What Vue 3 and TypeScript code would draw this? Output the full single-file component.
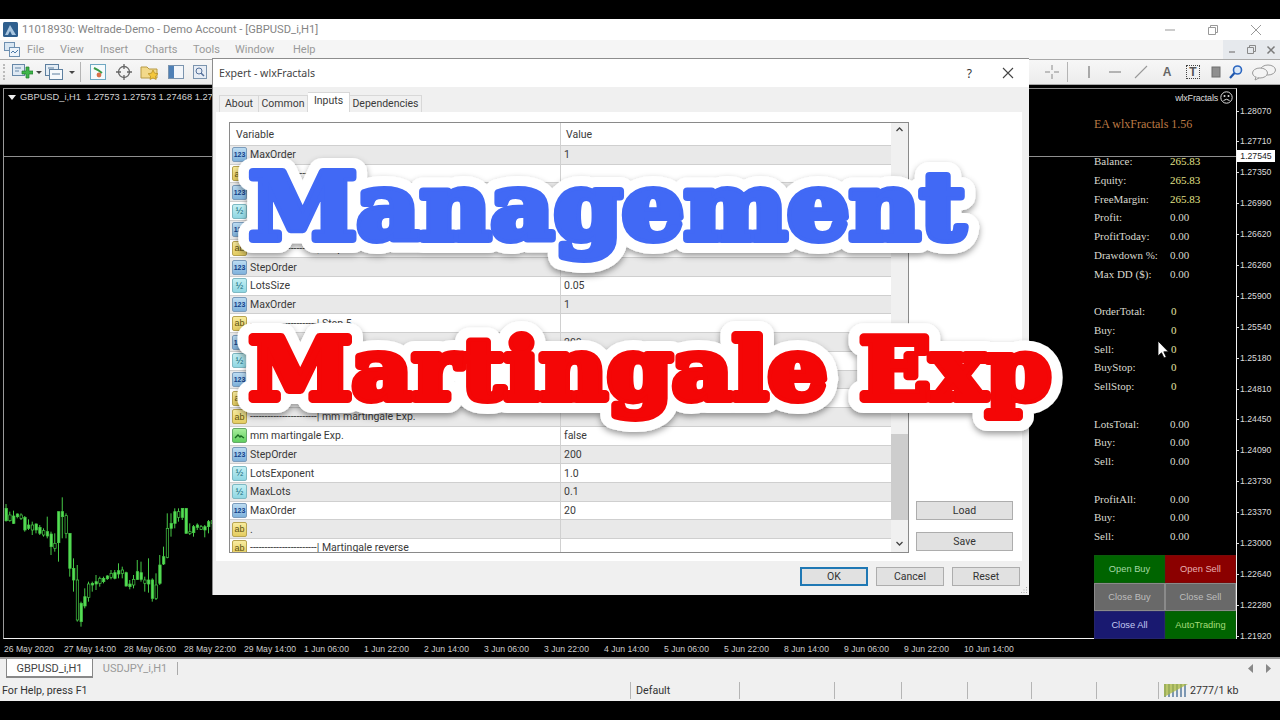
<script setup lang="ts">
const menus: string[] = ['File', 'View', 'Insert', 'Charts', 'Tools', 'Window', 'Help']

type Row = { icon: string; glyph: string; name: string; value: string }
const N = (name: string, value = ''): Row => ({ icon: 'n', glyph: '123', name, value })
const H = (name: string, value = ''): Row => ({ icon: 'h', glyph: '½', name, value })
const A = (name: string): Row => ({ icon: 'a', glyph: 'ab', name, value: '' })
const rows: Row[] = [
  N('MaxOrder', '1'),
  A('-----------------------| Step 3'),
  N('StepOrder', '200'),
  H('LotsSize', '0.05'),
  N('MaxOrder', '1'),
  A('-----------------------| Step 4'),
  N('StepOrder', '200'),
  H('LotsSize', '0.05'),
  N('MaxOrder', '1'),
  A('-----------------------| Step 5'),
  N('StepOrder', '200'),
  H('LotsSize', '0.05'),
  N('MaxOrder', '1'),
  A('.'),
  A('-----------------------| mm martingale Exp.'),
  { icon: 'b', glyph: '', name: 'mm martingale Exp.', value: 'false' },
  N('StepOrder', '200'),
  H('LotsExponent', '1.0'),
  H('MaxLots', '0.1'),
  N('MaxOrder', '20'),
  A('.'),
  A('-----------------------| Martingale reverse'),
]

const prices: string[] = ['1.28070', '1.27710', '1.27350', '1.26990', '1.26620', '1.26260', '1.25900', '1.25540', '1.25180', '1.24810', '1.24450', '1.24090', '1.23730', '1.23370', '1.23000', '1.22640', '1.22280', '1.21920']
const times: string[] = ['26 May 2020', '27 May 14:00', '28 May 06:00', '28 May 22:00', '29 May 14:00', '1 Jun 06:00', '1 Jun 22:00', '2 Jun 14:00', '3 Jun 06:00', '3 Jun 22:00', '4 Jun 14:00', '5 Jun 06:00', '5 Jun 22:00', '8 Jun 14:00', '9 Jun 06:00', '9 Jun 22:00', '10 Jun 14:00']

type Stat = { l?: string; v?: string; c?: string }
const stats: Stat[] = [
  { l: 'Balance:', v: '265.83', c: 'y' }, { l: 'Equity:', v: '265.83', c: 'y' }, { l: 'FreeMargin:', v: '265.83', c: 'y' },
  { l: 'Profit:', v: '0.00' }, { l: 'ProfitToday:', v: '0.00' }, { l: 'Drawdown %:', v: '0.00' }, { l: 'Max DD ($):', v: '0.00' }, {},
  { l: 'OrderTotal:', v: '0', c: 'i' }, { l: 'Buy:', v: '0', c: 'i' }, { l: 'Sell:', v: '0', c: 'i' }, { l: 'BuyStop:', v: '0', c: 'i' }, { l: 'SellStop:', v: '0', c: 'i' }, {},
  { l: 'LotsTotal:', v: '0.00' }, { l: 'Buy:', v: '0.00' }, { l: 'Sell:', v: '0.00' }, {},
  { l: 'ProfitAll:', v: '0.00' }, { l: 'Buy:', v: '0.00' }, { l: 'Sell:', v: '0.00' },
]
const actions = [
  { t: 'Open Buy', c: 'dg' }, { t: 'Open Sell', c: 'dr' },
  { t: 'Close Buy', c: 'gr' }, { t: 'Close Sell', c: 'gr' },
  { t: 'Close All', c: 'bl' }, { t: 'AutoTrading', c: 'dg2' },
]
const statusSeps: number[] = [630, 739, 834, 901, 967, 1031, 1096, 1158]
const statusCells = statusSeps.map((x, i) => ({ w: (i < statusSeps.length - 1 ? statusSeps[i + 1] : 1280) - x, t: i === 0 ? 'Default' : '' }))

// hi, lo, bodyTop, bodyBottom, in 3x crop units, origin (0,480)
const raw: number[][] = [[72,125,85,122],[95,125,105,122],[92,132,108,130],[100,115,102,110],[100,120,105,115],[108,155,112,150],[118,150,135,145],[125,165,135,150],[130,160,132,150],[135,165,142,160],[145,170,152,165],[110,175,155,168],[155,225,162,200],[160,215,190,205],[95,245,95,188],[52,175,95,110],[100,175,107,160],[160,290,160,265],[235,335,265,300],[255,425,300,420],[365,440,370,425],[325,385,350,378],[305,365,312,352],[305,335,310,315],[285,330,305,312],[290,320,295,310],[290,310,295,305],[285,300,288,296],[270,298,280,292],[270,298,278,295],[250,295,272,282],[260,295,270,280],[275,320,278,318],[300,328,312,320],[285,325,298,315],[240,300,275,298],[245,305,278,298],[290,335,300,310],[235,338,300,312],[295,365,300,355],[280,360,315,355],[225,315,255,310],[200,255,230,252],[100,235,145,232],[100,170,130,145],[85,145,95,130],[85,125,95,112],[85,120,85,112],[85,160,85,160],[130,165,155,160],[135,170,140,158],[130,150,135,142],[135,150,140,148],[135,172,140,150],[120,160,125,140],[120,150,122,130]]
const candles = raw.map((r, i) => ({
  x: 5 + 3.75 * i,
  hi: 480 + r[0] / 3,
  lo: 480 + r[1] / 3,
  top: 480 + r[2] / 3,
  h: Math.max(1, (r[3] - r[2]) / 3),
  solid: i % 3 !== 1,
}))
</script>

<template>
  <div class="page">
    <header class="caption">
      <svg class="appicon" width="15" height="15" viewBox="0 0 15 15"><rect width="15" height="15" rx="1.500" fill="#2f5f8e"/><path d="M2 13 7 3l6 10H9L7 9l-2 4z" fill="#a9c6e0"/></svg>
      <span class="capt">11018930: Weltrade-Demo - Demo Account - [GBPUSD_i,H1]</span>
      <div class="winbtns">
        <svg width="12" height="12" viewBox="0 0 12 12"><path d="M1 6h10" stroke="#999"/></svg>
        <svg width="12" height="12" viewBox="0 0 12 12"><path d="M1.500 3.500h7v7h-7zM3.500 3.500v-2h7v7h-2" fill="none" stroke="#999"/></svg>
        <svg width="12" height="12" viewBox="0 0 12 12"><path d="M1 1l10 10M11 1 1 11" stroke="#999"/></svg>
      </div>
    </header>

    <nav class="menubar">
      <svg class="menuicon" width="16" height="15" viewBox="0 0 16 15"><rect x=".5" y=".5" width="10" height="8" fill="#d8e6f2" stroke="#6d8fb0"/><rect x="5.500" y="5.500" width="10" height="9" fill="#eef4fa" stroke="#6d8fb0"/><path d="M7 11l2-2 2 2 3-3" fill="none" stroke="#4b7aa8"/></svg>
      <span v-for="m in menus" :key="m" class="menu">{{ m }}</span>
      <div class="mdi">
        <span><svg width="9" height="9" viewBox="0 0 9 9"><path d="M1 7h6" stroke="#8a8a8a" stroke-width="1.400"/></svg></span>
        <span><svg width="11" height="11" viewBox="0 0 11 11"><path d="M1.500 3.500h6v6h-6zM3.500 3V1.500h6v6H8" fill="none" stroke="#8a8a8a"/></svg></span>
        <span><svg width="10" height="10" viewBox="0 0 10 10"><path d="M1.500 1.500l7 7M8.500 1.500l-7 7" stroke="#7a7a7a" stroke-width="1.500"/></svg></span>
      </div>
    </nav>

    <div class="toolbar">
      <div class="tgroup">
        <span class="grip"></span>
        <svg class="ti first" width="22" height="18" viewBox="0 0 22 18"><rect x="1.500" y="1.500" width="12" height="11" fill="#dfe9f3" stroke="#6788a8"/><path d="M4 5h6M4 8h4" stroke="#6788a8"/><path d="M11 8h4V4h3v4h4v3h-4v4h-3v-4h-4z" fill="#3fb54a" stroke="#1f7d2c" stroke-width=".7"/></svg>
        <span class="caret"></span>
        <svg class="ti second" width="22" height="18" viewBox="0 0 22 18"><rect x="1.500" y="1.500" width="13" height="11" fill="#e4edf5" stroke="#5d7f9f"/><rect x="5.500" y="6.500" width="13" height="10" fill="#f6f9fc" stroke="#5d7f9f"/><path d="M4 5h6M8 11h8" stroke="#5d7f9f"/></svg>
        <span class="caret"></span>
        <span class="vsep"></span>
        <svg class="ti t3" width="18" height="18" viewBox="0 0 18 18"><rect x="1.500" y="1.500" width="15" height="15" fill="#f5fafc" stroke="#6fa8c2"/><path d="M5 5l4 2 4 3" fill="none" stroke="#3a9b47" stroke-width="2"/><circle cx="10" cy="12" r="2.400" fill="#d8704a"/></svg>
        <svg class="ti t4" width="18" height="18" viewBox="0 0 18 18"><circle cx="9" cy="9" r="5.500" fill="none" stroke="#666" stroke-width="1.300"/><path d="M9 1v5M9 12v5M1 9h5M12 9h5" stroke="#666" stroke-width="1.300"/></svg>
        <svg class="ti t5" width="20" height="18" viewBox="0 0 20 18"><path d="M1 4h6l2 2h8v9H1z" fill="#f2d98a" stroke="#b89b45"/><path d="M13 7l1.600 3.200 3.400.5-2.500 2.400.6 3.400-3.100-1.600-3 1.600.6-3.400-2.500-2.400 3.400-.5z" fill="#f4c73a" stroke="#b08a1c" stroke-width=".7"/></svg>
        <svg class="ti t6" width="18" height="18" viewBox="0 0 18 18"><rect x="1.500" y="2.500" width="15" height="13" fill="#f3f6fa" stroke="#7b94ae"/><rect x="2" y="3" width="5" height="12" fill="#4f80b6"/></svg>
        <svg class="ti t7" width="16" height="18" viewBox="0 0 16 18"><rect x="1.500" y="2.500" width="13" height="13" fill="#e7edf5" stroke="#7b94ae"/><circle cx="7" cy="8" r="3" fill="none" stroke="#54709a"/><path d="M9 10l3 3" stroke="#54709a" stroke-width="1.500"/></svg>
      </div>
      <div class="tgroup right">
        <span class="r cross"><svg width="16" height="16" viewBox="0 0 16 16"><path d="M8 1v5M8 10v5M1 8h5M10 8h5" stroke="#8a8a8a"/></svg></span>
        <span class="vsep short"></span>
        <span class="r"><svg width="16" height="16" viewBox="0 0 16 16"><path d="M8 2v12" stroke="#777" stroke-width="1.200"/></svg></span>
        <span class="r"><svg width="16" height="16" viewBox="0 0 16 16"><path d="M2 8h12" stroke="#888" stroke-width="1.200"/></svg></span>
        <span class="r"><svg width="16" height="16" viewBox="0 0 16 16"><path d="M2 14 14 2" stroke="#999" stroke-width="1.100"/></svg></span>
        <span class="r letter">A</span>
        <span class="r boxt">T</span>
        <span class="r rect"><svg width="16" height="16" viewBox="0 0 16 16"><rect x="4" y="3" width="8" height="10" fill="#8f8f8f" stroke="#6f6f6f"/></svg></span>
        <span class="r mag"><svg width="16" height="16" viewBox="0 0 16 16"><circle cx="9.500" cy="6" r="4" fill="#dbe8f7" stroke="#2b66c0" stroke-width="1.600"/><path d="M6.500 9 2 14" stroke="#1f56ab" stroke-width="2.200"/></svg></span>
        <span class="r chat"><svg width="26" height="18" viewBox="0 0 26 18"><ellipse cx="17" cy="7" rx="7.500" ry="5" fill="#f4f4f4" stroke="#9a9a9a"/><ellipse cx="9" cy="10" rx="7.500" ry="5" fill="#f4f4f4" stroke="#9a9a9a"/><path d="M5 14 4 17l4-2" fill="#f4f4f4" stroke="#9a9a9a"/></svg></span>
      </div>
    </div>

    <main class="chartarea">
      <div class="chartrow">
        <div class="plot">
          <div class="symbol"><i class="tri"></i>GBPUSD_i,H1&nbsp; 1.27573 1.27573 1.27468 1.27545</div>
          <div class="eaname">wlxFractals <svg width="13" height="13" viewBox="0 0 13 13"><circle cx="6.500" cy="6.500" r="5.700" fill="none" stroke="#ddd"/><circle cx="4.500" cy="5" r="1" fill="#ddd"/><circle cx="8.500" cy="5" r="1" fill="#ddd"/><path d="M3.500 9.500Q6.500 7 9.500 9.500" fill="none" stroke="#ddd"/></svg></div>
          <div class="hline"></div>
          <svg class="candles" width="212" height="150" viewBox="0 490 212 150">
            <g v-for="(c, i) in candles" :key="i">
              <path :d="`M${c.x + 1} ${c.hi}V${c.lo}`" stroke="#46c946" stroke-width="1" />
              <rect :x="c.x" :y="c.top" width="2.400" :height="c.h" :fill="c.solid ? '#55dd55' : '#000'" stroke="#46c946" stroke-width=".7" />
            </g>
          </svg>
          <aside class="side">
            <div class="eatitle">EA wlxFractals 1.56</div>
            <div class="stats">
              <div v-for="(s, i) in stats" :key="i" class="stat">
                <span class="sl">{{ s.l }}</span><span class="sv" :class="s.c">{{ s.v }}</span>
              </div>
            </div>
            <div class="actions">
              <div v-for="a in actions" :key="a.t" class="act" :class="a.c">{{ a.t }}</div>
            </div>
          </aside>
        </div>
        <div class="axis">
          <div v-for="p in prices" :key="p" class="price">{{ p }}</div>
          <div class="cur">1.27545</div>
        </div>
      </div>
      <div class="timeaxis"><span v-for="t in times" :key="t">{{ t }}</span></div>
    </main>

    <div class="tabbar">
      <div class="ctab active">GBPUSD_i,H1</div>
      <div class="ctab">USDJPY_i,H1</div>
      <span class="tabsep"></span>
      <div class="tabnav">
        <svg width="7" height="9" viewBox="0 0 7 9"><path d="M6 0v9L1 4.500z" fill="#888"/></svg>
        <svg width="7" height="9" viewBox="0 0 7 9"><path d="M1 0v9l5-4.500z" fill="#888"/></svg>
      </div>
    </div>

    <footer class="status">
      <span class="help">For Help, press F1</span>
      <div v-for="(c, i) in statusCells" :key="i" class="scell" :style="{ width: c.w + 'px' }">
        {{ c.t }}
        <template v-if="i === statusCells.length - 1">
          <svg width="24" height="13" viewBox="0 0 24 13" class="net">
            <path v-for="n in 12" :key="n" :d="`M${n * 2 - 1} 0V13`" :stroke="n % 2 ? '#1f4f80' : '#f0f0f0'" stroke-width="1.100"/>
            <path d="M0 0H24L0 13z" fill="#a8b83e" opacity=".75"/>
          </svg>
          <span class="kb">2777/1 kb</span>
        </template>
      </div>
    </footer>

    <section class="dialog">
      <div class="dtitle">
        <span>Expert - wlxFractals</span>
        <div class="dbtns">
          <span class="q">?</span>
          <svg width="12" height="12" viewBox="0 0 12 12"><path d="M1 1l10 10M11 1 1 11" stroke="#444" stroke-width="1.100"/></svg>
        </div>
      </div>
      <div class="dtabs">
        <span class="dtab">About</span>
        <span class="dtab">Common</span>
        <span class="dtab on">Inputs</span>
        <span class="dtab">Dependencies</span>
      </div>
      <div class="dpanel">
        <div class="table">
          <div class="tmain">
            <div class="thead"><span class="c1">Variable</span><span class="c2">Value</span></div>
            <div v-for="(r, i) in rows" :key="i" class="trow" :class="{ alt: i % 2 === 0 }">
              <span class="c1">
                <i class="ic" :class="r.icon">{{ r.glyph }}<svg v-if="r.icon === 'b'" width="13" height="13" viewBox="0 0 13 13"><path d="M2 9l3-3 2 2 1-1 3 2" fill="none" stroke="#1a6b22" stroke-width="1.400"/></svg></i>
                <span class="tx">{{ r.name }}</span>
              </span>
              <span class="c2">{{ r.value }}</span>
            </div>
          </div>
          <div class="scroll">
            <svg width="17" height="14" viewBox="0 0 17 14"><path d="M5.500 8 8.500 5l3 3" fill="none" stroke="#444" stroke-width="1.300"/></svg>
            <div class="thumb"></div>
            <svg width="17" height="17" viewBox="0 0 17 17"><path d="M5.500 7l3 3 3-3" fill="none" stroke="#444" stroke-width="1.300"/></svg>
          </div>
        </div>
        <div class="sidebtns">
          <button class="btn wide">Load</button>
          <button class="btn wide">Save</button>
        </div>
      </div>
      <div class="dfoot">
        <button class="btn def">OK</button>
        <button class="btn">Cancel</button>
        <button class="btn">Reset</button>
        <svg class="gripper" width="8" height="8" viewBox="0 0 8 8"><path d="M6 1h1v1H6zM6 3.500h1v1H6zM3.500 3.500h1v1h-1zM6 6h1v1H6zM3.500 6h1v1h-1zM1 6h1v1H1z" fill="#aaa"/></svg>
      </div>
    </section>

    <svg class="overlay" width="1280" height="720" viewBox="0 0 1280 720">
      <defs>
        <filter id="shade" x="-5%" y="-20%" width="110%" height="150%"><feDropShadow dx="0" dy="3" stdDeviation="3" flood-color="#000" flood-opacity=".4"/></filter>
      </defs>
      <g filter="url(#shade)">
        <text class="hw" x="249" y="239" font-size="92" textLength="716" lengthAdjust="spacingAndGlyphs">Management</text>
      </g>
      <text class="hc" x="249" y="239" font-size="92" textLength="716" lengthAdjust="spacingAndGlyphs" fill="#4169f5" stroke="#4169f5">Management</text>
      <g filter="url(#shade)">
        <text class="hw" x="249" y="399" font-size="85" textLength="802" lengthAdjust="spacingAndGlyphs">Martingale Exp</text>
      </g>
      <text class="hc" x="249" y="399" font-size="85" textLength="802" lengthAdjust="spacingAndGlyphs" fill="#f40606" stroke="#f40606">Martingale Exp</text>
      <path d="M1158 341v15l3.500-3.200 2.500 5.200 2.300-1-2.500-5.200h4.700z" fill="#fff" stroke="#000" stroke-width=".8"/>
    </svg>
  </div>
</template>

<style>
html, body { margin: 0; background: #000; }
</style>

<style scoped>
.page { position: relative; width: 1280px; height: 720px; overflow: hidden; background: #000; padding: 19px 0 19px; box-sizing: border-box; display: flex; flex-direction: column; font-family: "Liberation Sans", Arial, sans-serif; }
.caption { height: 21px; background: #fff; display: flex; align-items: center; padding-left: 3px; color: #858585; font: 11.2px Roboto, sans-serif; }
.appicon { flex: none; }
.capt { margin-left: 4px; white-space: nowrap; }
.winbtns { margin-left: auto; display: flex; gap: 31px; padding-right: 18px; align-items: center; }
.menubar { height: 19px; background: #f5f5f5; border-bottom: 1px solid #a8a8a8; display: flex; align-items: center; color: #9a9a9a; font: 11px Roboto, sans-serif; padding-left: 4px; }
.menu { margin-left: 7px; width: 33px; }
.menubar .menu:nth-child(2) { width: 26px; }
.menubar .menu:nth-child(3) { width: 33px; }
.menubar .menu:nth-child(4) { width: 38px; }
.menubar .menu:nth-child(5) { width: 41px; }
.menubar .menu:nth-child(6) { width: 35px; }
.menubar .menu:nth-child(7) { width: 51px; }
.mdi { margin-left: auto; display: flex; height: 19px; }
.mdi span { width: 19px; display: flex; align-items: center; justify-content: center; background: #e6e9ed; }
.toolbar { height: 24px; background: linear-gradient(#f7f7f7, #ececec); border-bottom: 1px solid #a9a9a9; display: flex; justify-content: space-between; align-items: center; }
.tgroup { display: flex; align-items: center; height: 24px; }
.grip { width: 2px; height: 16px; margin-left: 3px; border-left: 2px dotted #bbb; }
.ti { flex: none; }
.first { margin-left: 4px; }
.caret { width: 0; height: 0; border: 3px solid transparent; border-top: 3px solid #444; border-bottom: 0; margin-left: 3px; }
.second { margin-left: 2px; }
.vsep { width: 1px; height: 20px; background: #b4b4b4; margin-left: 5px; }
.t3 { margin-left: 8px; }
.t4 { margin-left: 8px; }
.t5 { margin-left: 7px; }
.t6 { margin-left: 7px; }
.t7 { margin-left: 7px; }
.right { padding-right: 1px; }
.r { width: 26px; height: 20px; display: flex; align-items: center; justify-content: center; }
.vsep.short { margin: 0 8px 0 2px; }
.letter { font-size: 12px; font-weight: 700; color: #666; }
.boxt { width: 14px; height: 14px; margin: 0 6px; border: 1px dotted #444; color: #555; font-size: 12px; font-weight: 700; box-sizing: border-box; }
.rect { width: 20px; }
.mag { width: 20px; margin-right: 3px; }
.chat { width: 30px; }
.chartarea { height: 574px; background: #000; display: flex; flex-direction: column; padding-top: 3px; box-sizing: border-box; border-bottom: 2px solid #9a9a9a; }
.chartrow { display: flex; height: 551px; }
.plot { position: relative; width: 1234px; margin-left: 3px; box-sizing: border-box; border: 1px solid #f2f2f2; border-top-color: #8a8a8a; border-left-color: #9a9a9a; }
.symbol { color: #d2d2d2; font-size: 9.3px; padding: 3px 0 0 4px; white-space: nowrap; display: flex; align-items: center; }
.tri { width: 0; height: 0; border: 4px solid transparent; border-top: 5px solid #eee; border-bottom: 0; margin-right: 4px; }
.eaname { position: absolute; right: 3px; top: 2px; color: #ddd; font-size: 9px; letter-spacing: -.2px; display: flex; align-items: center; gap: 2px; }
.hline { position: absolute; left: 0; right: 0; top: 67px; height: 1px; background: #8f8f8f; }
.candles { position: absolute; left: -4px; top: 401px; }
.side { position: absolute; right: 0; top: 0; bottom: 0; width: 142px; font-family: "Liberation Serif", serif; font-size: 11px; display: flex; flex-direction: column; }
.eatitle { color: #bc7a45; font-size: 12px; margin-top: 28px; height: 35px; line-height: 14px; }
.stats { display: flex; flex-direction: column; }
.stat { height: 18.75px; line-height: 18.75px; display: flex; color: #d9d9cf; }
.sl { width: 76px; }
.sv { color: #d9d9cf; }
.sv.y { color: #e2e28a; }
.sv.i { padding-left: 1px; color: #e2e2a5; }
.actions { margin-top: auto; display: grid; grid-template-columns: 1fr 1fr; grid-auto-rows: 28px; height: 83px; font: 9.3px "Liberation Sans", sans-serif; }
.act { display: flex; align-items: center; justify-content: center; border: 1px solid #6a6a6a; box-sizing: border-box; }
.dg { background: #006400; color: #a5d8a5; border-color: #0b5c0b; }
.dg2 { background: #006400; color: #a5dc7a; border-color: #0b5c0b; }
.dr { background: #8b0000; color: #e8b0b0; border-color: #7a0808; }
.gr { background: #696969; color: #bdbdbd; border-color: #8a8a8a; }
.bl { background: #191970; color: #c3cbf2; border-color: #24246b; }
.axis { position: relative; width: 43px; padding-top: 7.500px; box-sizing: border-box; display: flex; flex-direction: column; }
.price { position: relative; height: 30.900px; line-height: 30.900px; padding-left: 3px; color: #dcdcdc; font-size: 8.700px; flex: none; }
.price::before { content: ""; position: absolute; left: 0; top: 15px; width: 2px; height: 1px; background: #ddd; }
.cur { position: absolute; left: 0; top: 62px; width: 38px; height: 12px; background: #fff; color: #222; font-size: 8.700px; line-height: 12px; text-align: center; }
.timeaxis { display: flex; padding: 1px 0 0 4px; height: 20px; align-items: center; color: #cfcfcf; font-size: 8.600px; }
.timeaxis span { width: 60px; flex: none; white-space: nowrap; }
.tabbar { height: 21px; background: #f0f0f0; display: flex; align-items: flex-start; font: 11px Roboto, sans-serif; color: #9a9a9a; }
.ctab { height: 19px; line-height: 19px; width: 84px; box-sizing: border-box; text-align: center; }
.ctab.active { background: #fff; color: #444; border: 1px solid #888; border-top: 0; border-bottom-width: 2px; width: 87px; margin-left: 6px; }
.tabsep { width: 1px; height: 13px; background: #aaa; margin-top: 3px; }
.tabnav { margin-left: auto; display: flex; gap: 11px; padding: 5px 8px 0 0; }
.status { height: 21px; background: #f0f0f0; display: flex; align-items: center; font: 10.700px Roboto, sans-serif; color: #333; }
.help { width: 630px; padding-left: 2px; box-sizing: border-box; flex: none; white-space: nowrap; }
.scell { flex: none; height: 17px; border-left: 1px solid #b5b5b5; box-sizing: border-box; padding-left: 5px; display: flex; align-items: center; white-space: nowrap; }
.net { flex: none; }
.kb { margin-left: 2px; }
.dialog { position: absolute; left: 212px; top: 58px; width: 817px; height: 537px; background: #f0f0f0; box-sizing: border-box; border: 1px solid #8d8d8d; border-width: 1px 0 0 1px; display: flex; flex-direction: column; font: 10.5px Roboto, sans-serif; color: #3a3a3a; }
.dtitle { height: 28px; background: #fff; display: flex; align-items: center; padding-left: 6px; font: 10.600px "Noto Sans", sans-serif; color: #444; }
.dbtns { margin-left: auto; display: flex; align-items: center; gap: 30px; padding-right: 15px; }
.q { font-size: 12px; color: #333; }
.dtabs { height: 25px; display: flex; align-items: flex-end; padding-left: 6px; }
.dtab { height: 16px; line-height: 16px; text-align: center; box-sizing: content-box; border: 1px solid #d8d8d8; border-bottom: 0; border-left: 0; background: #f0f0f0; }
.dtab:nth-child(1) { width: 38px; border-left: 1px solid #d8d8d8; }
.dtab:nth-child(2) { width: 48px; }
.dtab:nth-child(3) { width: 41px; }
.dtab:nth-child(4) { width: 71px; }
.dtab.on { height: 19px; line-height: 15px; background: #fff; }
.dpanel { height: 449px; margin: 0 7px 0 3px; background: #fff; display: flex; padding: 10px 0 0 13px; box-sizing: border-box; }
.table { width: 680px; height: 431px; box-sizing: border-box; border: 1px solid #8a8a8a; display: flex; overflow: hidden; flex: none; }
.tmain { width: 661px; flex: none; }
.thead { height: 22px; display: flex; align-items: center; background: #fff; }
.thead .c1 { padding-left: 6px; }
.thead .c2 { padding-left: 5px; }
.c1 { width: 330px; flex: none; box-sizing: border-box; display: flex; align-items: center; height: 100%; white-space: nowrap; overflow: hidden; }
.c2 { flex: 1; padding-left: 3px; border-left: 1px solid #d0d0d0; height: 100%; display: flex; align-items: center; box-sizing: border-box; }
.trow { height: 18.720px; display: flex; box-sizing: border-box; border-top: 1px solid #cfcfcf; background: #fff; }
.trow.alt { background: #e9e9e9; }
.ic { flex: none; display: inline-flex; align-items: center; justify-content: center; width: 15px; height: 15px; margin-left: 2px; border-radius: 2px; font: 700 7px "Liberation Sans", sans-serif; box-sizing: border-box; border: 1px solid #8a8a8a; }
.ic.n { background: linear-gradient(#bcdcf2, #7fb2dc); color: #123f88; border-color: #7b9cbc; }
.ic.a { background: linear-gradient(#f9ec9f, #e4cc60); color: #5f5410; border-color: #b8a450; font-size: 9px; font-weight: 400; }
.ic.h { background: linear-gradient(#c3f0f4, #8fd6e2); color: #0f6274; border-color: #7eb9c3; font-weight: 400; font-size: 9px; }
.ic.b { background: linear-gradient(#a8ee9c, #60cf60); border-color: #66a96a; }
.tx { margin-left: 3px; }
.scroll { width: 17px; flex: none; background: #f0f0f0; display: flex; flex-direction: column; }
.thumb { margin: 297px 0 0; height: 86px; background: #cdcdcd; }
.scroll svg:last-child { margin-top: auto; }
.sidebtns { margin-left: 7px; width: 97px; display: flex; flex-direction: column; gap: 12px; padding-top: 379px; }
.btn { box-sizing: border-box; width: 68px; height: 19px; padding: 0; background: #e1e1e1; border: 1px solid #adadad; color: #333; font: 10.500px Roboto, sans-serif; flex: none; }
.btn.wide { width: 97px; }
.btn.def { border: 2px solid #1f78b4; }
.dfoot { position: relative; flex: 1; display: flex; justify-content: flex-end; align-items: flex-start; gap: 8px; padding: 6px 9px 0 0; }
.gripper { position: absolute; right: 1px; bottom: 1px; }
.overlay { position: absolute; left: 0; top: 0; pointer-events: none; }
.hw, .hc { font-family: "DejaVu Serif", serif; font-weight: 700; stroke-linejoin: round; paint-order: stroke; }
.hw { fill: #fff; stroke: #fff; stroke-width: 28px; }
.hc { stroke-width: 8px; }
</style>
